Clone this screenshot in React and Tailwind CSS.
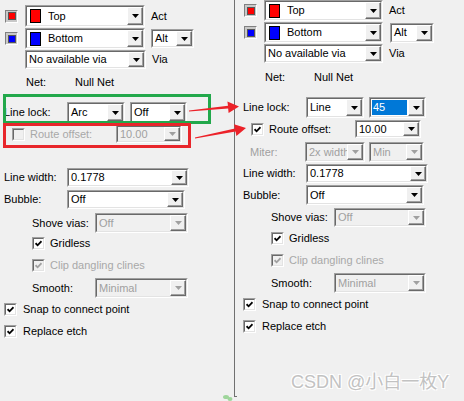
import React from "react";

const font = { fontFamily: '"Liberation Sans", Arial, sans-serif' };

function Arrow({ disabled }) {
  return (
    <div className="flex h-full w-[16px] shrink-0 items-center justify-center border border-t-white border-l-white border-b-[#696969] border-r-[#696969] bg-[#f0f0f0] shadow-[inset_-1px_-1px_0_#a0a0a0]">
      <svg width="7" height="4" viewBox="0 0 7 4">
        <polygon points="0,0 7,0 3.5,4" fill={disabled ? "#a0a0a0" : "#000"} />
      </svg>
    </div>
  );
}

function Combo({ cls, value, disabled, swatch, selected }) {
  return (
    <div className={`${cls} flex shrink-0 border border-t-[#a0a0a0] border-l-[#a0a0a0] border-b-white border-r-white`}>
      <div className={`flex min-w-0 flex-1 border border-t-[#696969] border-l-[#696969] border-b-[#e3e3e3] border-r-[#e3e3e3] ${disabled ? "bg-[#f0f0f0]" : "bg-white"}`}>
        <div className="flex min-w-0 flex-1 items-center overflow-hidden p-[1px]">
          {swatch && <span className={`ml-[2px] mr-[6px] h-[14px] w-[11px] shrink-0 border border-black ${swatch}`} />}
          <span className={`flex h-full flex-1 items-center whitespace-nowrap pl-[1px] ${selected ? "bg-[#0078d7] text-white" : disabled ? "text-[#a0a0a0]" : "text-black"}`}>
            {value}
          </span>
        </div>
        <Arrow disabled={disabled} />
      </div>
    </div>
  );
}

function Check({ checked, disabled }) {
  return (
    <span className="flex h-[13px] w-[13px] shrink-0 border border-t-[#a0a0a0] border-l-[#a0a0a0] border-b-white border-r-white">
      <span className={`flex h-full w-full items-center justify-center border border-t-[#696969] border-l-[#696969] border-b-[#e3e3e3] border-r-[#e3e3e3] ${disabled ? "bg-[#f0f0f0]" : "bg-white"}`}>
        {checked && (
          <svg width="7" height="7" viewBox="0 0 7 7">
            <path d="M0.6 3.2 L2.6 5.3 L6.5 1.2" fill="none" stroke={disabled ? "#a0a0a0" : "#000"} strokeWidth="1.8" />
          </svg>
        )}
      </span>
    </span>
  );
}

function LayerBtn({ color }) {
  return (
    <span className="ml-[1px] flex h-[13px] w-[13px] items-center justify-center border border-t-[#808080] border-l-[#808080] border-b-white border-r-white bg-[#c8c8c8]">
      <span className={`h-[8px] w-[8px] border border-[#555] ${color}`} />
    </span>
  );
}

function Panel({ after }) {
  return (
    <div className={`flex flex-col text-[11px] leading-none text-black ${after ? "pl-[8px] pt-0" : "pl-[4px] pt-[5px]"}`}>
      <div className={`flex items-center ${after ? "h-[21px]" : "h-[22px]"}`}>
        <div className="w-[21px]"><LayerBtn color="bg-[#ff0000]" /></div>
        <Combo cls={after ? "w-[119px] h-[21px]" : "w-[120px] h-[22px]"} value="Top" swatch="bg-[#ff0000]" />
        <span className="ml-[6px]">Act</span>
      </div>
      <div className="mt-[1px] flex h-[21px] items-center">
        <div className="w-[21px]"><LayerBtn color="bg-[#0000ff]" /></div>
        <Combo cls={after ? "w-[119px] h-[21px]" : "w-[120px] h-[21px]"} value="Bottom" swatch="bg-[#0000ff]" />
        <Combo cls={after ? "ml-[7px] w-[44px] h-[20px]" : "ml-[6px] w-[43px] h-[19px]"} value="Alt" />
      </div>
      <div className="mt-[1px] flex h-[19px] items-center">
        <div className="w-[21px]" />
        <Combo cls={after ? "w-[119px] h-[19px]" : "w-[121px] h-[19px]"} value="No available via" />
        <span className="ml-[6px]">Via</span>
      </div>
      <div className={`flex h-[14px] items-center ${after ? "mt-[7px]" : "mt-[6px]"}`}>
        <span className="ml-[22px] w-[49px]">Net:</span>
        <span>Null Net</span>
      </div>
      <div className="mt-[13px] flex h-[21px] items-center">
        <span className="w-[63px]">Line lock:</span>
        <Combo cls="w-[58px] h-[21px]" value={after ? "Line" : "Arc"} />
        <Combo cls="ml-[5px] w-[57px] h-[21px]" value={after ? "45" : "Off"} selected={after} />
      </div>
      <div className="mt-[2px] flex h-[18px] items-center">
        <div className="flex w-[112px] items-center pl-[8px]">
          <Check checked={after} disabled={!after} />
          <span className={`ml-[5px] ${after ? "text-black" : "text-[#a8a8a8]"}`}>Route offset:</span>
        </div>
        <Combo cls="w-[66px] h-[18px]" value="10.00" disabled={!after} />
      </div>
      {after && (
        <div className="mt-[4px] flex h-[20px] items-center">
          <span className="w-[62px] pl-[7px] text-[#a0a0a0]">Miter:</span>
          <Combo cls="w-[60px] h-[20px]" value="2x width" disabled />
          <Combo cls="ml-[4px] w-[55px] h-[20px]" value="Min" disabled />
        </div>
      )}
      <div className={`flex h-[19px] items-center ${after ? "mt-[2px]" : "mt-[25px]"}`}>
        <span className="w-[63px]">Line width:</span>
        <Combo cls="w-[122px] h-[19px]" value="0.1778" />
      </div>
      <div className={`flex items-center ${after ? "mt-[2px] h-[20px]" : "mt-[3px] h-[19px]"}`}>
        <span className="w-[63px]">Bubble:</span>
        <Combo cls={after ? "w-[118px] h-[20px]" : "w-[118px] h-[19px]"} value="Off" />
      </div>
      <div className={`flex items-center ${after ? "mt-[3px] h-[19px]" : "mt-[4px] h-[20px]"}`}>
        <span className="ml-[28px] w-[63px]">Shove vias:</span>
        <Combo cls={after ? "w-[92px] h-[19px]" : "w-[93px] h-[20px]"} value="Off" disabled />
      </div>
      <div className={`flex h-[14px] items-center pl-[28px] ${after ? "mt-[4px]" : "mt-[3px]"}`}>
        <Check checked />
        <span className="ml-[5px]">Gridless</span>
      </div>
      <div className="mt-[8px] flex h-[14px] items-center pl-[28px]">
        <Check checked disabled />
        <span className="ml-[5px] text-[#a8a8a8]">Clip dangling clines</span>
      </div>
      <div className="mt-[6px] flex h-[20px] items-center">
        <span className="ml-[28px] w-[63px]">Smooth:</span>
        <Combo cls={after ? "w-[92px] h-[20px]" : "w-[93px] h-[20px]"} value="Minimal" disabled />
      </div>
      <div className="mt-[4px] flex h-[14px] items-center">
        <Check checked />
        <span className="ml-[6px]">Snap to connect point</span>
      </div>
      <div className="mt-[8px] flex h-[14px] items-center">
        <Check checked />
        <span className="ml-[6px]">Replace etch</span>
      </div>
    </div>
  );
}

export default function App() {
  return (
    <div className="relative h-[401px] w-[464px] overflow-hidden bg-[#f0f0f0]" style={font}>
      <div className="flex">
        <div className="w-[234px] shrink-0">
          <Panel />
        </div>
        <div className="relative h-[397px] w-px shrink-0 bg-[#707070]">
          <span className="absolute bottom-0 left-0 h-px w-[3px] bg-[#707070]" />
        </div>
        <div className="flex-1">
          <Panel after />
        </div>
      </div>

      {/* annotation boxes */}
      <div className="absolute left-[3px] top-[94px] h-[30px] w-[208px] border-[3px] border-[#22a84b]" />
      <div className="absolute left-[3px] top-[123px] h-[25px] w-[188px] border-[3px] border-[#e8262b]" />

      <svg className="pointer-events-none absolute left-0 top-0" width="464" height="401">
        <polygon points="189,110.5 228,105.8 227.4,101.5 239,106.5 228.6,113 228.15,108.6 189,111.6" fill="#ec2229" />
        <polygon points="194.9,137.4 234.9,128.6 234,124.2 246,128 236.4,136 235.5,131.6 195.1,138.6" fill="#ec2229" />
        <ellipse cx="226" cy="397" rx="3" ry="2" fill="#9ed59a" />
        <ellipse cx="230" cy="399" rx="2.5" ry="2" fill="#9ed59a" />
      </svg>

      <div
        className="absolute left-[291px] top-[371px] whitespace-nowrap text-[18px] leading-[22px] text-[#c2c2c2]"
        style={{
          fontFamily: '"Liberation Sans", "Noto Sans CJK SC", sans-serif',
          textShadow: "1px 1px 0 #fff, -1px -1px 0 #fff, 1px -1px 0 #fff, -1px 1px 0 #fff",
        }}
      >
        CSDN @小白一枚Y
      </div>
    </div>
  );
}
